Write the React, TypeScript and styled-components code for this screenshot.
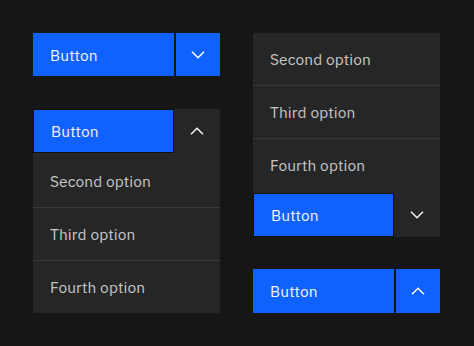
import React from 'react'
import styled, { createGlobalStyle } from 'styled-components'

const GlobalStyle = createGlobalStyle`
  html, body {
    margin: 0;
    padding: 0;
    background: #161616;
  }
  body {
    font-family: "IBM Plex Sans", "Noto Sans", "Open Sans", sans-serif;
  }
`

const Page = styled.div`
  display: flex;
  gap: 33px;
  padding: 33px 0 0 33px;
  width: 474px;
  height: 346px;
  box-sizing: border-box;
`

const Column = styled.div`
  display: flex;
  flex-direction: column;
  gap: ${(p: { $gap: number }) => p.$gap}px;
  width: 187px;
`

const Split = styled.div`
  display: flex;
  gap: 2px;
  height: ${(p: { $height: number }) => p.$height}px;
`

const MainButton = styled.button<{ $outlined?: boolean }>`
  width: 141px;
  height: 100%;
  box-sizing: border-box;
  display: flex;
  align-items: center;
  padding: 0 0 0 17px;
  border: ${(p) => (p.$outlined ? '1px solid #101010' : 'none')};
  background: #0f62fe;
  color: #f4f4f4;
  font-family: inherit;
  font-size: 15.5px;
  letter-spacing: 0.1px;
  cursor: pointer;
`

const IconButton = styled.button`
  flex: 1;
  height: 100%;
  display: flex;
  align-items: center;
  justify-content: center;
  padding: 0;
  border: none;
  background: #0f62fe;
  color: #ffffff;
  cursor: pointer;
`

const Panel = styled.div`
  display: flex;
  flex-direction: column;
  background: #262626;
`

const Header = styled.div`
  display: flex;
  height: 44px;
`

const Toggle = styled.div`
  flex: 1;
  display: flex;
  align-items: center;
  justify-content: center;
  color: #f4f4f4;
`

const List = styled.ul<{ $top: number; $bottom: number }>`
  list-style: none;
  margin: 0;
  padding: ${(p) => p.$top}px 0 ${(p) => p.$bottom}px;
`

const Option = styled.li`
  height: 52px;
  display: flex;
  align-items: center;
  padding-left: 17px;
  color: #c6c6c6;
  font-size: 15.5px;
  letter-spacing: 0.1px;
  & + & {
    border-top: 1px solid #393939;
  }
`

const Chevron = ({ up }: { up?: boolean }) => (
  <svg width="14" height="8" viewBox="0 0 14 8" fill="none">
    <path
      d={up ? 'M1 7.2L7 1.2L13 7.2' : 'M1 0.8L7 6.8L13 0.8'}
      stroke="currentColor"
      strokeWidth="1.5"
    />
  </svg>
)

const options = ['Second option', 'Third option', 'Fourth option']

const App: React.FC = () => {
  return (
    <>
      <GlobalStyle />
      <Page>
        <Column $gap={33}>
          <Split $height={43}>
            <MainButton>Button</MainButton>
            <IconButton>
              <Chevron />
            </IconButton>
          </Split>
          <Panel>
            <Header>
              <MainButton $outlined>Button</MainButton>
              <Toggle>
                <Chevron up />
              </Toggle>
            </Header>
            <List $top={2} $bottom={0}>
              {options.map((o) => (
                <Option key={o}>{o}</Option>
              ))}
            </List>
          </Panel>
        </Column>
        <Column $gap={32}>
          <Panel>
            <List $top={0} $bottom={2}>
              {options.map((o) => (
                <Option key={o}>{o}</Option>
              ))}
            </List>
            <Header>
              <MainButton $outlined>Button</MainButton>
              <Toggle>
                <Chevron />
              </Toggle>
            </Header>
          </Panel>
          <Split $height={44}>
            <MainButton>Button</MainButton>
            <IconButton>
              <Chevron up />
            </IconButton>
          </Split>
        </Column>
      </Page>
    </>
  )
}

export default App
